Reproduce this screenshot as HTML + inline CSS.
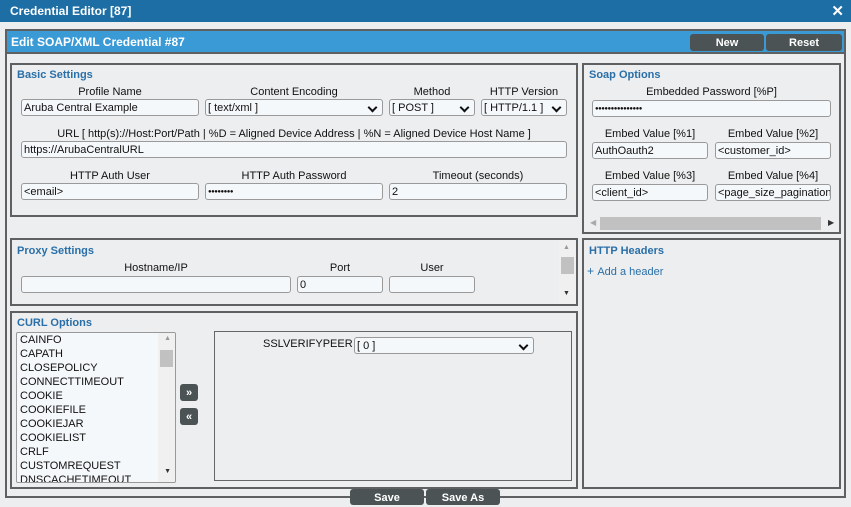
<!DOCTYPE html>
<html><head><meta charset="utf-8"><style>
*{box-sizing:border-box;margin:0;padding:0}
body{width:851px;height:505px;background:#eceeef;font-family:"Liberation Sans",Arial,sans-serif;font-size:12px;color:#111;position:relative;overflow:hidden}
.a{position:absolute}
.title{left:0;top:0;width:851px;height:22px;background:#1c6ea4;color:#fff;font-weight:bold;font-size:12px;line-height:23px;padding-left:10px}
.frame{left:5px;top:29px;width:841px;height:469px;border:2px solid #5f6062}
.hdr{left:7px;top:31px;width:837px;height:23px;background:#3a9ad6;color:#fff;font-weight:bold;line-height:23px;padding-left:4px;border-bottom:2px solid #5f6062}
.btn{background:#4b5355;color:#fff;font-weight:bold;font-size:11px;text-align:center;border-radius:3px;height:17px;line-height:18px}
.p{border:2px solid #5f6062;background:#eceeef}
.pt{color:#2a6fa8;font-weight:bold;font-size:11px}
.lb{font-size:11px;text-align:center;color:#111}
.in{background:#f5f8fa;border:1px solid #9a9a9a;border-radius:3px;height:17px;font-size:11px;line-height:16px;padding-left:2px;white-space:nowrap;overflow:hidden}
.sel:after{content:"";position:absolute;right:6px;top:4px;width:5px;height:5px;border-right:2px solid #111;border-bottom:2px solid #111;transform:rotate(45deg)}
.li{font-size:11px;line-height:14px;padding-left:3px}
.dots{font-size:6px;letter-spacing:-0.5px}
</style></head><body>
<div class="a title">Credential Editor [87]</div>
<div class="a" style="right:7px;top:2px;color:#fff;font-weight:bold;font-size:15px">✕</div>
<div class="a frame"></div>
<div class="a hdr">Edit SOAP/XML Credential #87</div>
<div class="a btn" style="left:690px;top:34px;width:74px">New</div>
<div class="a btn" style="left:766px;top:34px;width:76px">Reset</div>

<div class="a p" style="left:10px;top:63px;width:568px;height:154px"></div>
<div class="a pt" style="left:17px;top:69px">Basic Settings</div>
<div class="a lb" style="left:21px;top:86px;width:178px">Profile Name</div>
<div class="a lb" style="left:205px;top:86px;width:178px">Content Encoding</div>
<div class="a lb" style="left:389px;top:86px;width:86px">Method</div>
<div class="a lb" style="left:481px;top:86px;width:86px">HTTP Version</div>
<div class="a in" style="left:21px;top:99px;width:178px">Aruba Central Example</div>
<div class="a in sel" style="left:205px;top:99px;width:178px">[ text/xml ]</div>
<div class="a in sel" style="left:389px;top:99px;width:86px">[ POST ]</div>
<div class="a in sel" style="left:481px;top:99px;width:86px">[ HTTP/1.1 ]</div>
<div class="a lb" style="left:21px;top:128px;width:546px">URL [ http(s)://Host:Port/Path | %D = Aligned Device Address | %N = Aligned Device Host Name ]</div>
<div class="a in" style="left:21px;top:141px;width:546px">https://ArubaCentralURL</div>
<div class="a lb" style="left:21px;top:170px;width:178px">HTTP Auth User</div>
<div class="a lb" style="left:205px;top:170px;width:178px">HTTP Auth Password</div>
<div class="a lb" style="left:389px;top:170px;width:178px">Timeout (seconds)</div>
<div class="a in" style="left:21px;top:183px;width:178px">&lt;email&gt;</div>
<div class="a in dots" style="left:205px;top:183px;width:178px">●●●●●●●●</div>
<div class="a in" style="left:389px;top:183px;width:178px">2</div>

<div class="a p" style="left:582px;top:63px;width:259px;height:171px"></div>
<div class="a pt" style="left:589px;top:69px">Soap Options</div>
<div class="a lb" style="left:592px;top:86px;width:239px">Embedded Password [%P]</div>
<div class="a in dots" style="left:592px;top:100px;width:239px">●●●●●●●●●●●●●●●</div>
<div class="a lb" style="left:592px;top:128px;width:116px">Embed Value [%1]</div>
<div class="a lb" style="left:715px;top:128px;width:116px">Embed Value [%2]</div>
<div class="a in" style="left:592px;top:142px;width:116px">AuthOauth2</div>
<div class="a in" style="left:715px;top:142px;width:116px">&lt;customer_id&gt;</div>
<div class="a lb" style="left:592px;top:170px;width:116px">Embed Value [%3]</div>
<div class="a lb" style="left:715px;top:170px;width:116px">Embed Value [%4]</div>
<div class="a in" style="left:592px;top:184px;width:116px">&lt;client_id&gt;</div>
<div class="a in" style="left:715px;top:184px;width:116px">&lt;page_size_pagination&gt;</div>
<div class="a" style="left:600px;top:217px;width:221px;height:13px;background:#c1c1c1"></div>
<div class="a" style="left:590px;top:218px;font-size:8px;color:#aaa">◀</div>
<div class="a" style="left:828px;top:218px;font-size:8px;color:#333">▶</div>

<div class="a p" style="left:10px;top:238px;width:568px;height:68px"></div>
<div class="a pt" style="left:17px;top:245px">Proxy Settings</div>
<div class="a lb" style="left:21px;top:262px;width:270px">Hostname/IP</div>
<div class="a lb" style="left:297px;top:262px;width:86px">Port</div>
<div class="a lb" style="left:389px;top:262px;width:86px">User</div>
<div class="a in" style="left:21px;top:276px;width:270px"></div>
<div class="a in" style="left:297px;top:276px;width:86px">0</div>
<div class="a in" style="left:389px;top:276px;width:86px"></div>
<div class="a" style="left:559px;top:240px;width:17px;height:64px;background:#f0f0f0"></div>
<div class="a" style="left:561px;top:257px;width:13px;height:17px;background:#c1c1c1"></div>
<div class="a" style="left:563px;top:244px;font-size:7px;color:#999">▲</div>
<div class="a" style="left:563px;top:290px;font-size:7px;color:#333">▼</div>

<div class="a p" style="left:582px;top:238px;width:259px;height:251px"></div>
<div class="a pt" style="left:589px;top:245px">HTTP Headers</div>
<div class="a" style="left:587px;top:264px;color:#2a6fa8;font-size:12px">+ <span style="font-size:11px">Add a header</span></div>

<div class="a p" style="left:10px;top:311px;width:568px;height:178px"></div>
<div class="a pt" style="left:17px;top:317px">CURL Options</div>
<div class="a" style="left:16px;top:332px;width:160px;height:151px;border:1px solid #999;border-radius:2px;background:#f5f8fa;overflow:hidden">
<div class="li">CAINFO</div><div class="li">CAPATH</div><div class="li">CLOSEPOLICY</div><div class="li">CONNECTTIMEOUT</div><div class="li">COOKIE</div><div class="li">COOKIEFILE</div><div class="li">COOKIEJAR</div><div class="li">COOKIELIST</div><div class="li">CRLF</div><div class="li">CUSTOMREQUEST</div><div class="li">DNSCACHETIMEOUT</div>
<div class="a" style="right:0;top:0;width:17px;height:149px;background:#f0f0f0"></div>
<div class="a" style="right:2px;top:17px;width:13px;height:17px;background:#c1c1c1"></div>
<div class="a" style="right:4px;top:2px;font-size:7px;color:#999">▲</div>
<div class="a" style="right:4px;top:135px;font-size:7px;color:#333">▼</div>
</div>
<div class="a btn" style="left:180px;top:384px;width:18px;height:17px;font-size:11px">»</div>
<div class="a btn" style="left:180px;top:408px;width:18px;height:17px;font-size:11px">«</div>
<div class="a" style="left:214px;top:331px;width:358px;height:150px;border:1px solid #666"></div>
<div class="a" style="left:263px;top:338px;font-size:11px">SSLVERIFYPEER</div>
<div class="a in sel" style="left:354px;top:337px;width:180px">[ 0 ]</div>

<div class="a btn" style="left:350px;top:489px;width:74px;height:16px">Save</div>
<div class="a btn" style="left:426px;top:489px;width:74px;height:16px">Save As</div>
</body></html>
